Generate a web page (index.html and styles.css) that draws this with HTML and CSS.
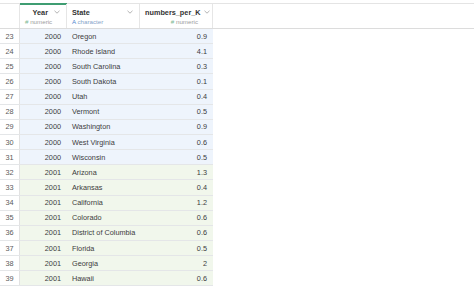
FILE: index.html
```html
<!DOCTYPE html>
<html lang="en">
    <head>
        <meta charset="UTF-8" />
        <meta name="viewport" content="width=device-width, initial-scale=1.0" />
        <title>Data grid</title>
        <link rel="stylesheet" href="styles.css">
    </head>
    <body>
        <div class="grid">
            <div class="head">
                <div class="hcell rownum"></div>
                <div class="hcell col-year num active">
                    <div class="htitle">
                        <span class="name">Year</span>
                        <svg class="chev" width="6" height="4" viewBox="0 0 6 4"><polyline points="0.5,0.8 3,3.2 5.5,0.8" /></svg>
                    </div>
                    <div class="htype"><span class="hash">#</span> numeric</div>
                </div>
                <div class="hcell col-state">
                    <div class="htitle">
                        <span class="name">State</span>
                        <svg class="chev" width="6" height="4" viewBox="0 0 6 4"><polyline points="0.5,0.8 3,3.2 5.5,0.8" /></svg>
                    </div>
                    <div class="htype chr"><span class="abc">A</span> character</div>
                </div>
                <div class="hcell col-val num">
                    <div class="htitle">
                        <span class="name">numbers_per_K</span>
                        <svg class="chev" width="6" height="4" viewBox="0 0 6 4"><polyline points="0.5,0.8 3,3.2 5.5,0.8" /></svg>
                    </div>
                    <div class="htype"><span class="hash">#</span> numeric</div>
                </div>
                <div class="hcell filler"></div>
            </div>

            <div class="rows" id="rows"></div>
        </div>

        <script>
            const data = [
                [23, 2000, "Oregon", "0.9"],
                [24, 2000, "Rhode Island", "4.1"],
                [25, 2000, "South Carolina", "0.3"],
                [26, 2000, "South Dakota", "0.1"],
                [27, 2000, "Utah", "0.4"],
                [28, 2000, "Vermont", "0.5"],
                [29, 2000, "Washington", "0.9"],
                [30, 2000, "West Virginia", "0.6"],
                [31, 2000, "Wisconsin", "0.5"],
                [32, 2001, "Arizona", "1.3"],
                [33, 2001, "Arkansas", "0.4"],
                [34, 2001, "California", "1.2"],
                [35, 2001, "Colorado", "0.6"],
                [36, 2001, "District of Columbia", "0.6"],
                [37, 2001, "Florida", "0.5"],
                [38, 2001, "Georgia", "2"],
                [39, 2001, "Hawaii", "0.6"],
            ];

            const rows = document.getElementById("rows");
            data.forEach(([n, year, state, val]) => {
                const row = document.createElement("div");
                // groupe par année : bleu pour 2000, vert pour 2001
                row.className = "row " + (year === 2000 ? "g-blue" : "g-green");
                row.innerHTML =
                    `<div class="cell rownum">${n}</div>` +
                    `<div class="cell col-year num">${year}</div>` +
                    `<div class="cell col-state">${state}</div>` +
                    `<div class="cell col-val num">${val}</div>`;
                rows.appendChild(row);
            });
        </script>
    </body>
</html>
```

FILE: styles.css
```css
body {
    margin: 0;
    background: white;
    font-family: "Liberation Sans", Arial, Helvetica, sans-serif;
    font-size: 7.3px;
    color: #3c3c3c;
    overflow: hidden;
}

.grid {
    padding-top: 3px;
}

.head {
    display: flex;
    height: 24px;
    border-top: 1px solid #e4e4e4;
    border-bottom: 1px solid #dcdcdc;
}

.hcell {
    box-sizing: border-box;
    border-right: 1px solid #e6e6e6;
    padding: 3px 6px 0 5px;
}

.hcell.active {
    box-shadow: 0 -1px 0 #3f9d72, inset 0 1px 0 #3f9d72;
}

.hcell.filler {
    flex: 1;
    border-right: none;
}

.rownum {
    width: 20px;
    flex: none;
}

.col-year {
    width: 47px;
    flex: none;
}

.col-state {
    width: 73px;
    flex: none;
}

.col-val {
    width: 73px;
    flex: none;
}

.htitle {
    display: flex;
    align-items: center;
    gap: 6px;
    height: 10px;
}

.htitle .name {
    flex: 1;
    font-weight: bold;
    color: #333;
    white-space: nowrap;
}

.num .htitle .name {
    text-align: right;
}

.col-val .htitle {
    gap: 3px;
}

.chev {
    flex: none;
    fill: none;
    stroke: #a0a0a0;
    stroke-width: 0.8;
}

.htype {
    margin-top: 1px;
    font-size: 6.2px;
    color: #9d9d9d;
    white-space: nowrap;
}

.num .htype {
    text-align: right;
    padding-right: 8px;
}

.htype .hash {
    color: #7bb793;
}

.htype.chr {
    color: #86a3c9;
}

.htype .abc {
    color: #4c86cf;
}

.row {
    display: flex;
    width: 213px;
    height: 15.15px;
    box-sizing: border-box;
    border-bottom: 1px solid #e4e6e8;
}

.cell {
    box-sizing: border-box;
    display: flex;
    align-items: center;
    padding: 0 5px;
    white-space: nowrap;
    overflow: hidden;
}

.cell.num {
    justify-content: flex-end;
    padding-right: 6px;
}

.cell.rownum {
    justify-content: center;
    color: #5a5a5a;
    background: white;
    border-right: 1px solid #e2e2e2;
}

.g-blue .cell:not(.rownum) {
    background: #eef4fc;
}

.g-green .cell:not(.rownum) {
    background: #f1f7ec;
}
```
